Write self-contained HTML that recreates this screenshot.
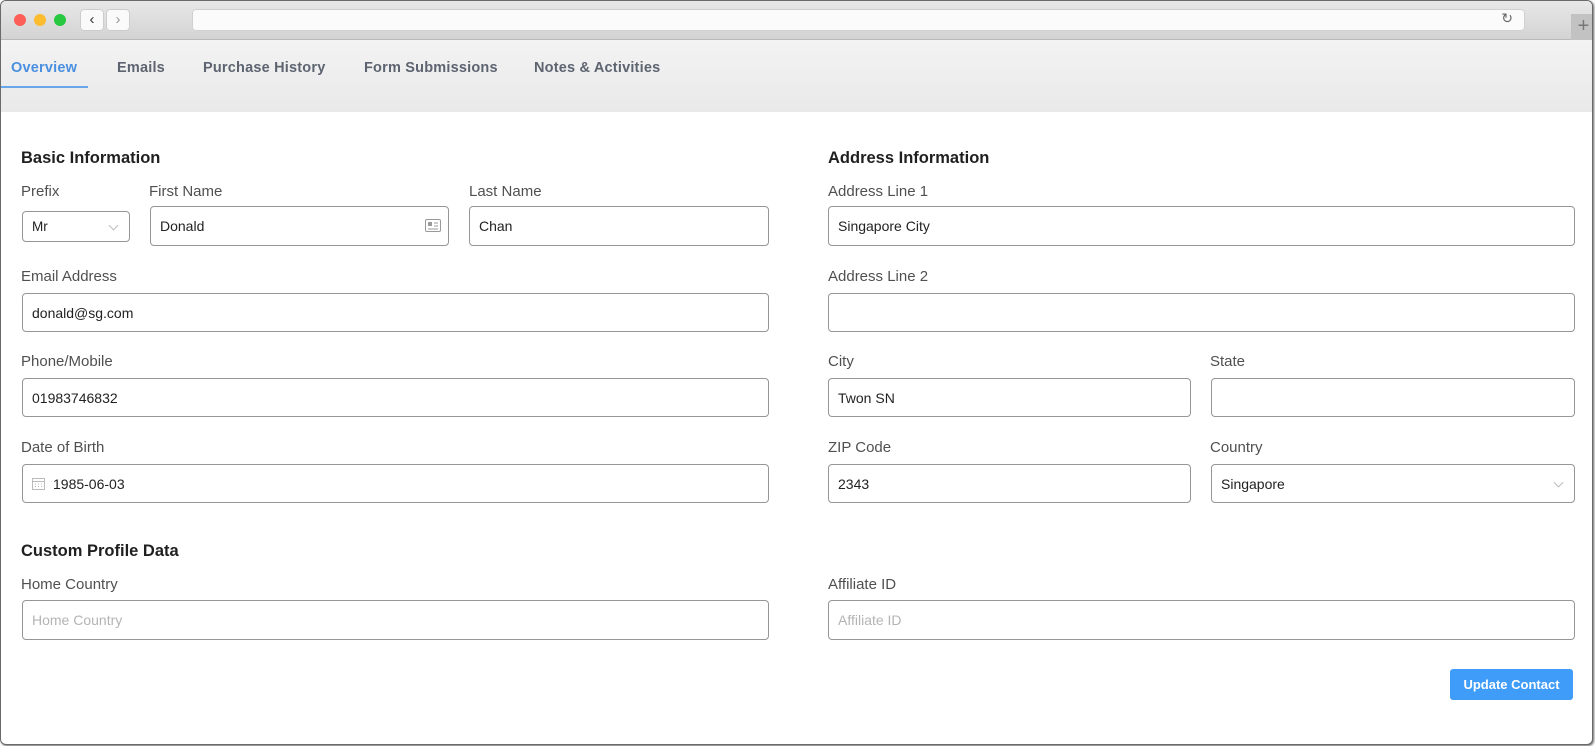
<!DOCTYPE html>
<html><head><meta charset="utf-8"><style>
*{box-sizing:border-box;margin:0;padding:0}
body{width:1595px;height:746px;background:#fff;font-family:"Liberation Sans",Arial,sans-serif;position:relative;overflow:hidden}
.win{position:absolute;left:0;top:0;width:1593px;height:745px;border:1px solid #6a6a6a;border-radius:6px;overflow:hidden;background:#fff;box-shadow:1px 1px 2px rgba(0,0,0,.6)}
.title{position:absolute;left:0;top:0;width:100%;height:39px;background:linear-gradient(#e8e8e8,#d3d3d3);border-bottom:1px solid #b9b9b9}
.dot{position:absolute;top:13px;width:12px;height:12px;border-radius:50%}
.nav{position:absolute;top:8px;height:22px;width:24px;background:#fafafa;border-radius:4px;box-shadow:0 0 0 1px #ccc inset}
.addr{position:absolute;left:191px;top:8px;width:1333px;height:22px;background:#fbfbfb;border-radius:4px;box-shadow:0 0 0 1px #d0d0d0 inset}
.plus{position:absolute;left:1570px;top:13px;width:25px;height:26px;background:#c2c2c2;color:#777;font-size:20px;text-align:center;line-height:24px}
.head{position:absolute;left:0;top:39px;width:100%;height:72px;background:linear-gradient(#f3f3f3,#e9e9ea)}
.tab{position:absolute;top:59px;font-size:14.5px;font-weight:bold;color:#5d6470;letter-spacing:.2px}
.h{position:absolute;font-size:16.5px;font-weight:bold;color:#1f1f1f}
.l{position:absolute;font-size:15px;color:#505050}
.i{position:absolute;border:1px solid #969696;border-radius:4px;font-size:14px;color:#222;padding-left:9px;display:flex;align-items:center}
.chev{position:absolute;right:12px;top:50%;width:7px;height:7px;border-right:1px solid #bbb;border-bottom:1px solid #bbb;transform:translateY(-70%) rotate(45deg)}
.btn{position:absolute;left:1449px;top:668px;width:123px;height:31px;background:#3f9cf9;border-radius:3px;color:#fff;font-size:13px;font-weight:bold;text-align:center;line-height:31px}
</style></head><body>
<div class="win">
<div class="title">
<div class="dot" style="left:13px;background:#fc5f57"></div>
<div class="dot" style="left:33px;background:#fdbc2e"></div>
<div class="dot" style="left:53px;background:#28c840"></div>
<div class="nav" style="left:79px;font-size:15px;color:#333;text-align:center;line-height:21px">&#8249;</div>
<div class="nav" style="left:105px;font-size:15px;color:#999;text-align:center;line-height:21px">&#8250;</div>
<div class="addr"><span style="position:absolute;right:12px;top:1px;font-size:14px;color:#666">&#8635;</span></div>
<div class="plus">+</div>
</div>
<div class="head"></div>
<div class="tab" style="left:10px;color:#4a8fe0">Overview</div>
<div style="position:absolute;left:0;top:85px;width:87px;height:2px;background:#6aa6ea"></div>
<div class="tab" style="left:116px">Emails</div>
<div class="tab" style="left:202px">Purchase History</div>
<div class="tab" style="left:363px">Form Submissions</div>
<div class="tab" style="left:533px">Notes &amp; Activities</div>

<div class="h" style="left:20px;top:148px">Basic Information</div>
<div class="h" style="left:827px;top:148px">Address Information</div>

<div class="l" style="left:20px;top:182px">Prefix</div>
<div class="l" style="left:148px;top:182px">First Name</div>
<div class="l" style="left:468px;top:182px">Last Name</div>
<div class="l" style="left:827px;top:182px">Address Line 1</div>
<div class="i" style="left:21px;top:210px;width:108px;height:31px;font-size:13.5px">Mr<div class="chev"></div></div>
<div class="i" style="left:149px;top:205px;width:299px;height:40px">Donald
<svg style="position:absolute;right:7px;top:12px" width="16" height="13" viewBox="0 0 16 13"><rect x="0.5" y="0.5" width="15" height="12" rx="1.5" fill="none" stroke="#999"/><rect x="3" y="3" width="4" height="4" fill="#999"/><path d="M9 4h4M9 7h4M3 10h10" stroke="#999"/></svg></div>
<div class="i" style="left:468px;top:205px;width:300px;height:40px">Chan</div>
<div class="i" style="left:827px;top:205px;width:747px;height:40px">Singapore City</div>

<div class="l" style="left:20px;top:267px">Email Address</div>
<div class="l" style="left:827px;top:267px">Address Line 2</div>
<div class="i" style="left:21px;top:292px;width:747px;height:39px">donald@sg.com</div>
<div class="i" style="left:827px;top:292px;width:747px;height:39px"></div>

<div class="l" style="left:20px;top:352px">Phone/Mobile</div>
<div class="l" style="left:827px;top:352px">City</div>
<div class="l" style="left:1209px;top:352px">State</div>
<div class="i" style="left:21px;top:377px;width:747px;height:39px">01983746832</div>
<div class="i" style="left:827px;top:377px;width:363px;height:39px">Twon SN</div>
<div class="i" style="left:1210px;top:377px;width:364px;height:39px"></div>

<div class="l" style="left:20px;top:438px">Date of Birth</div>
<div class="l" style="left:827px;top:438px">ZIP Code</div>
<div class="l" style="left:1209px;top:438px">Country</div>
<div class="i" style="left:21px;top:463px;width:747px;height:39px"><svg width="13" height="13" viewBox="0 0 13 13" style="margin-right:8px"><rect x="0.5" y="1.5" width="12" height="11" fill="none" stroke="#bbb"/><path d="M1 4.5h11M3 7h1M6 7h1M9 7h1M3 9.5h1M6 9.5h1M9 9.5h1" stroke="#bbb"/></svg>1985-06-03</div>
<div class="i" style="left:827px;top:463px;width:363px;height:39px">2343</div>
<div class="i" style="left:1210px;top:463px;width:364px;height:39px">Singapore<div class="chev"></div></div>

<div class="h" style="left:20px;top:541px">Custom Profile Data</div>
<div class="l" style="left:20px;top:575px">Home Country</div>
<div class="l" style="left:827px;top:575px">Affiliate ID</div>
<div class="i" style="left:21px;top:599px;width:747px;height:40px;color:#b4b4b4">Home Country</div>
<div class="i" style="left:827px;top:599px;width:747px;height:40px;color:#b4b4b4">Affiliate ID</div>

<div class="btn">Update Contact</div>
</div>
</body></html>
